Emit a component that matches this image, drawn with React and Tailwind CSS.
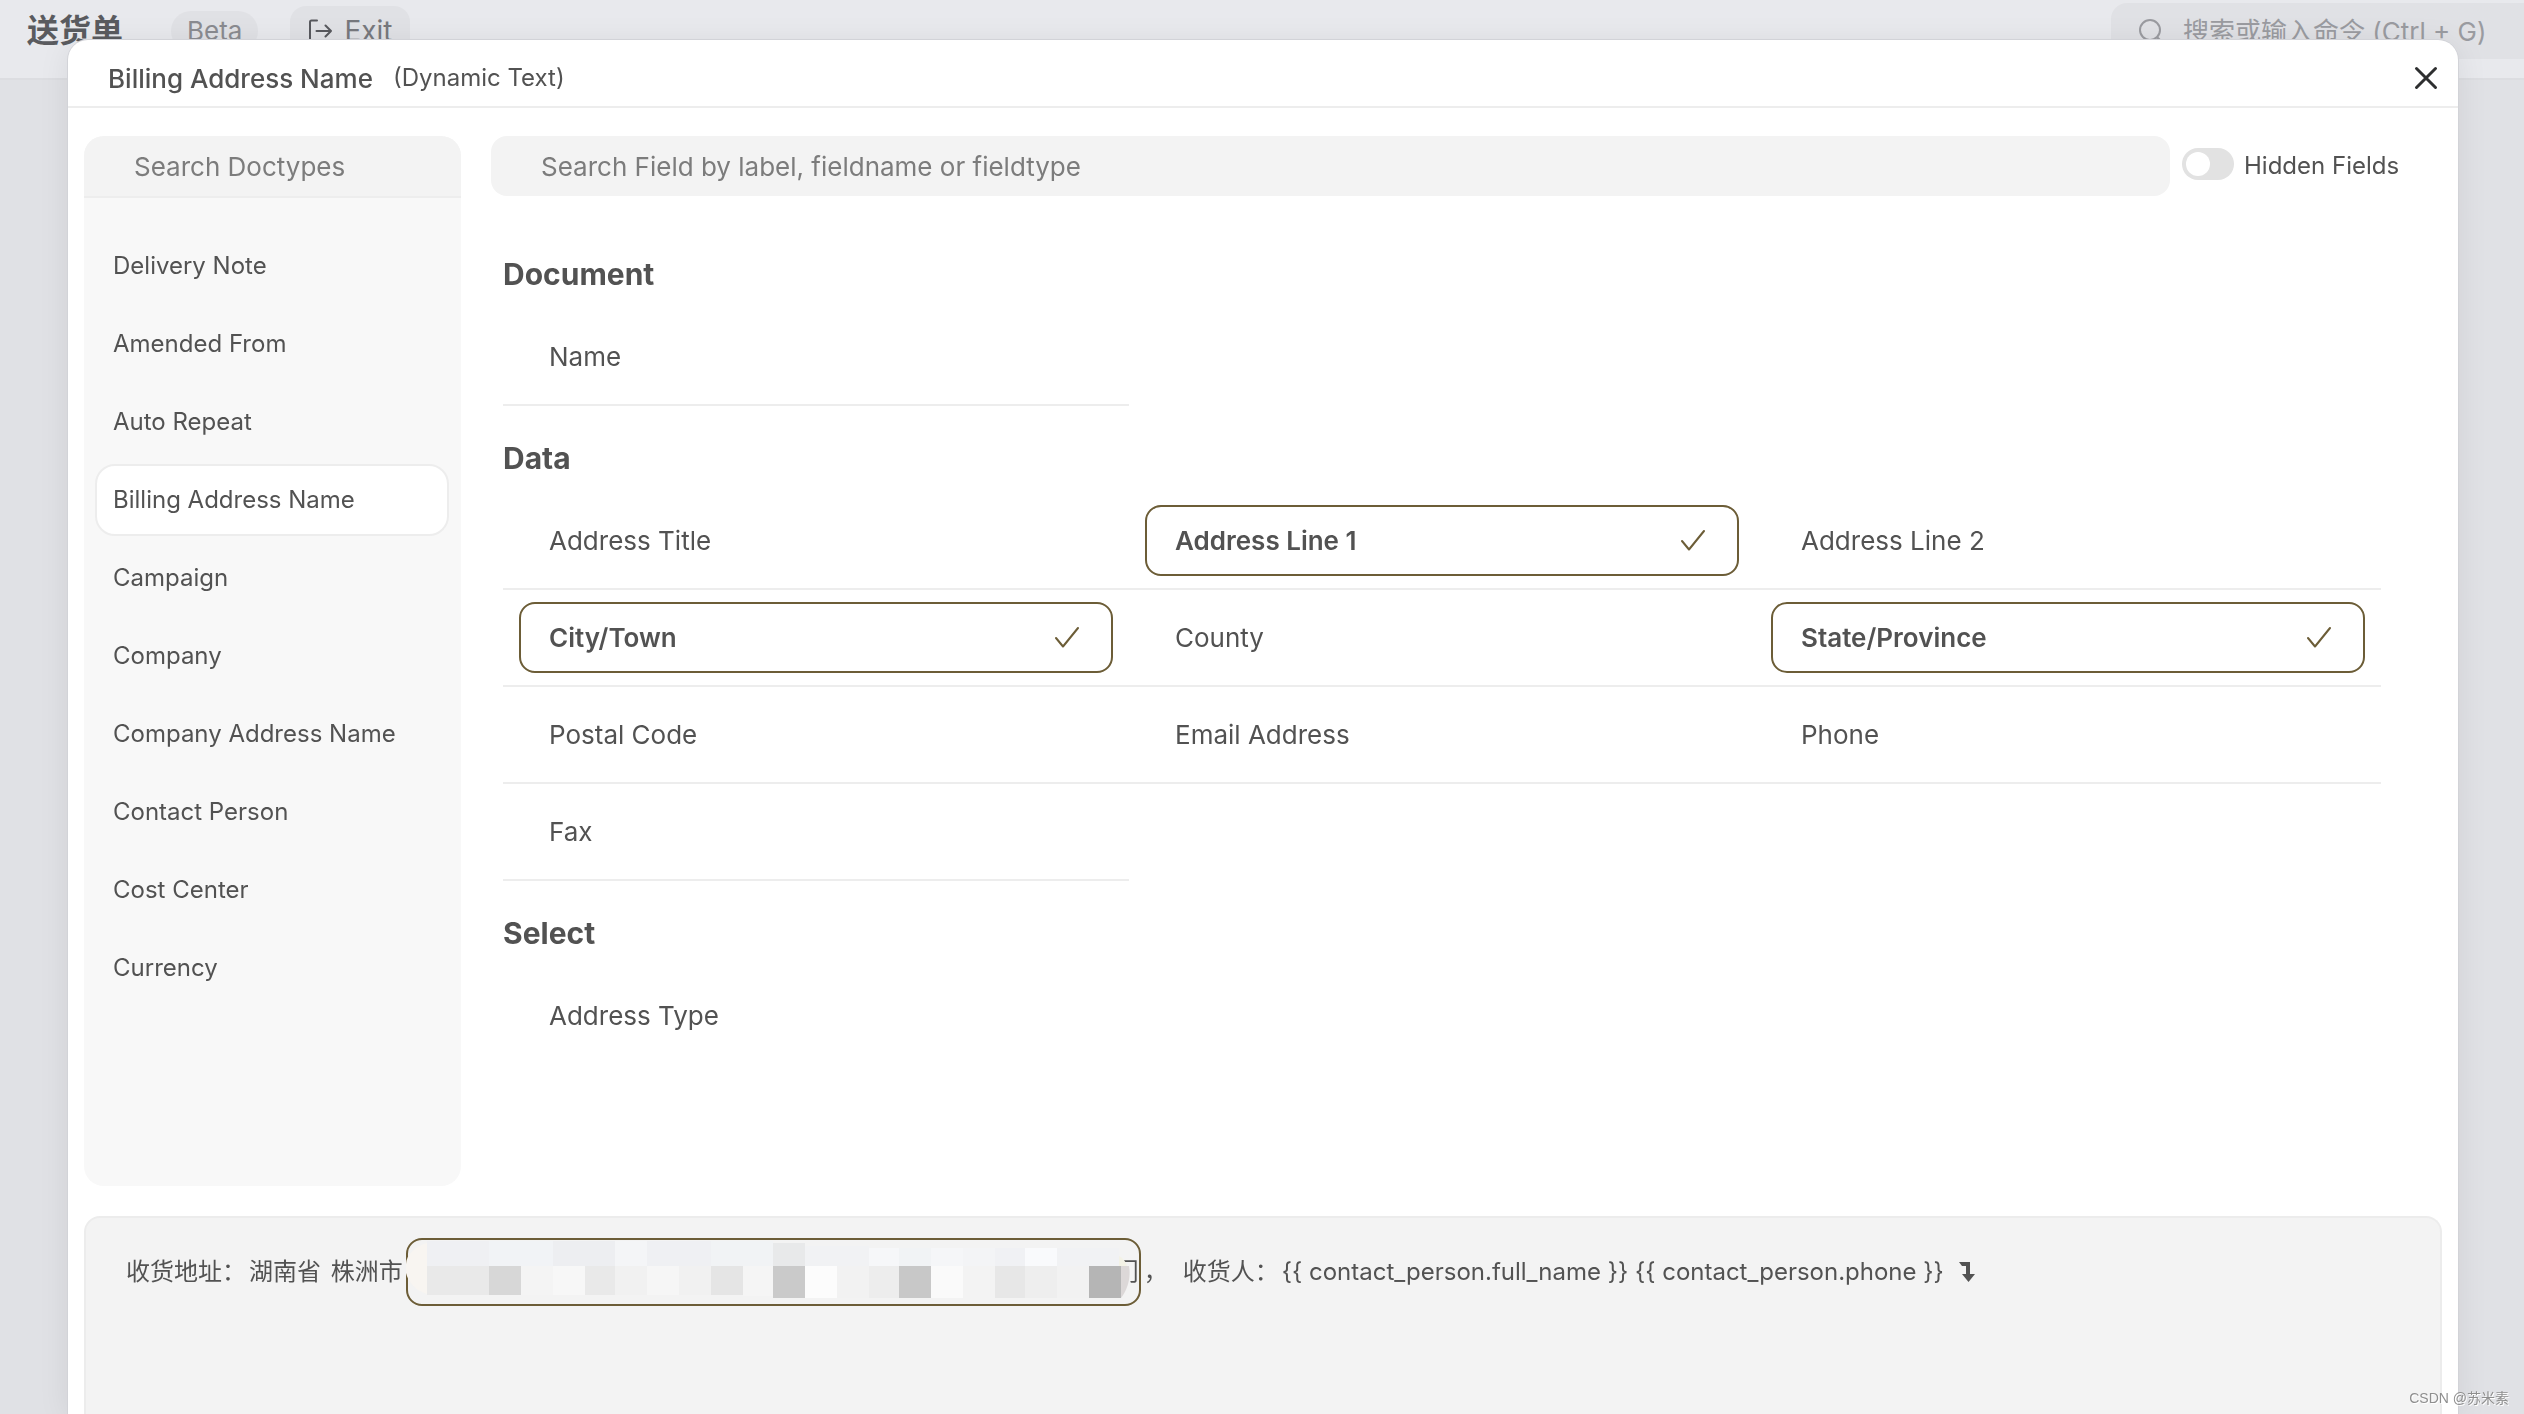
import React, { useState } from 'react';

const DOCTYPES = [
  'Delivery Note',
  'Amended From',
  'Auto Repeat',
  'Billing Address Name',
  'Campaign',
  'Company',
  'Company Address Name',
  'Contact Person',
  'Cost Center',
  'Currency',
];

const SECTIONS = [
  { title: 'Document', fields: ['Name'] },
  {
    title: 'Data',
    fields: [
      'Address Title',
      'Address Line 1',
      'Address Line 2',
      'City/Town',
      'County',
      'State/Province',
      'Postal Code',
      'Email Address',
      'Phone',
      'Fax',
    ],
  },
  { title: 'Select', fields: ['Address Type'], last: true },
];

// [x, y, width, height, fill] of each block that hides the address
const BLOCKS = [
  [21, 3, 62, 25, '#eff0f3'],
  [83, 3, 64, 25, '#f1f3f6'],
  [147, 3, 62, 25, '#edeef1'],
  [209, 3, 32, 25, '#f4f5f7'],
  [241, 3, 64, 25, '#eff0f3'],
  [305, 3, 62, 25, '#f1f3f5'],
  [367, 5, 32, 23, '#e8e9ea'],
  [399, 8, 64, 20, '#f1f2f4'],
  [463, 10, 30, 18, '#f6f7f9'],
  [493, 10, 32, 18, '#f1f3f5'],
  [525, 10, 32, 18, '#f5f6f8'],
  [557, 10, 32, 18, '#f3f4f6'],
  [589, 10, 30, 18, '#f0f1f4'],
  [619, 10, 32, 18, '#f9fafc'],
  [651, 10, 62, 18, '#f1f2f4'],
  [21, 28, 62, 29, '#e9e9e9'],
  [83, 28, 32, 29, '#d7d7d7'],
  [115, 28, 32, 29, '#f4f4f4'],
  [147, 28, 32, 29, '#f7f7f7'],
  [179, 28, 30, 29, '#e9e9e9'],
  [209, 28, 32, 29, '#f1f1f1'],
  [241, 28, 32, 29, '#f6f6f6'],
  [273, 28, 32, 29, '#f1f1f1'],
  [305, 28, 32, 29, '#e5e5e5'],
  [337, 28, 30, 30, '#f5f5f5'],
  [367, 28, 32, 32, '#cacaca'],
  [399, 28, 32, 32, '#fcfcfc'],
  [431, 28, 32, 32, '#f2f2f2'],
  [463, 28, 30, 32, '#ededed'],
  [493, 28, 32, 32, '#c8c8c8'],
  [525, 28, 32, 32, '#fafafa'],
  [557, 28, 32, 32, '#f3f3f3'],
  [589, 28, 30, 32, '#e7e7e7'],
  [619, 28, 32, 32, '#eeeeee'],
  [651, 28, 32, 32, '#f2f2f2'],
  [683, 28, 32, 32, '#b5b5b5'],
];

function TopBar() {
  return (
    <header className="flex h-20 items-start border-b-2 border-[#dcdde1] bg-[#e8e9ed] pl-[27px]">
      <h1 className="mt-[7px] text-[32px] leading-12 font-bold text-[#5a5b5f]">送货单</h1>
      <span className="mt-[11px] ml-12 rounded-full bg-[#e0e1e5] px-4 text-[26px] leading-10 text-[#8a8b90]">
        Beta
      </span>
      <button
        type="button"
        className="mt-[6px] ml-8 flex h-[50px] items-center gap-3 rounded-2xl bg-[#e0e1e5] px-[18px] text-[28px] text-[#77787d]"
      >
        <svg className="h-6 w-6" viewBox="0 0 24 24" fill="none" stroke="#58595e" strokeWidth="2" strokeLinecap="round" strokeLinejoin="round">
          <path d="M9 1.500H3.500a1.500 1.500 0 0 0-1.500 1.500v18a1.500 1.500 0 0 0 1.500 1.500H9" />
          <path d="M8.500 12H23M17.500 6.500L23 12l-5.500 5.500" />
        </svg>
        Exit
      </button>
      <label className="mt-[3px] ml-auto flex h-14 w-[413px] items-center rounded-l-2xl bg-[#e0e1e5] pl-7">
        <svg className="h-6 w-6 shrink-0" viewBox="0 0 24 24" fill="none" stroke="#9a9ba0" strokeWidth="2" strokeLinecap="round">
          <circle cx="11" cy="11" r="10" />
          <path d="M18.500 18.500L23 23" />
        </svg>
        <input
          type="text"
          aria-label="Search"
          placeholder="搜索或输入命令 (Ctrl + G)"
          className="ml-5 w-full min-w-0 bg-transparent text-[26px] outline-none placeholder:text-[#9a9ba0]"
        />
      </label>
    </header>
  );
}

function DoctypeList({ current, onSelect }) {
  return (
    <aside className="flex h-[1050px] w-[377px] shrink-0 flex-col overflow-hidden rounded-[20px] bg-[#f8f8f8]">
      <input
        type="text"
        aria-label="Search Doctypes"
        placeholder="Search Doctypes"
        className="h-[62px] border-b-2 border-[#ededed] bg-[#f3f3f3] px-[50px] text-[26px] outline-none placeholder:text-[#7c7c7c]"
      />
      <nav className="flex flex-col gap-[6px] pt-8 pr-3 pl-[11px]">
        {DOCTYPES.map((name) => (
          <button
            key={name}
            type="button"
            onClick={() => onSelect(name)}
            className={`h-[72px] rounded-[20px] border-2 px-4 text-left text-2xl ${
              name === current ? 'border-[#ededed] bg-white' : 'border-transparent'
            }`}
          >
            {name}
          </button>
        ))}
      </nav>
    </aside>
  );
}

function Field({ label, selected, bordered, onToggle }) {
  return (
    <div className={`px-4 py-3 ${bordered ? 'border-b-2 border-[#ededed]' : ''}`}>
      <button
        type="button"
        aria-pressed={selected}
        onClick={onToggle}
        className={`flex h-[71px] w-full items-center justify-between rounded-2xl border-2 px-7 text-left text-[26px] ${
          selected ? 'border-[#6c5d37] font-semibold' : 'border-transparent'
        }`}
      >
        {label}
        {selected && (
          <svg className="h-7 w-7" viewBox="0 0 28 28" fill="none" stroke="#6c5d37" strokeWidth="2" strokeLinecap="round" strokeLinejoin="round">
            <path d="M1 14L8 22.500L23 4" />
          </svg>
        )}
      </button>
    </div>
  );
}

function Preview() {
  return (
    <div className="min-h-0 flex-1 rounded-t-2xl border-2 border-b-0 border-[#ececec] bg-[#f3f3f3] px-10 pt-5">
      <div className="flex items-center gap-[3px] text-2xl whitespace-pre">
        <span>收货地址：</span>
        <span>湖南省 </span>
        <span>株洲市</span>
        <div className="relative flex h-[68px] w-[735px] items-center justify-end rounded-2xl border-2 border-[#6c5d37]">
          <span>门</span>
          <svg className="absolute -top-[2px] -left-[2px] h-[68px] w-[735px]" viewBox="0 0 735 68">
            <path d="M21 5C10 8 0 17 0 26v9c2 9 10 18 21 21z" fill="#f8f5f1" />
            {BLOCKS.map(([x, y, w, h, fill]) => (
              <rect key={`${x}-${y}`} x={x} y={y} width={w} height={h} fill={fill} />
            ))}
            <path d="M705 28h18c2 11-1 23-8 32h-10z" fill="#dcd8d8" />
            <path d="M683 28h32v32h-32z" fill="#b5b5b5" />
            <path d="M713 28V18c4 2 7 6 8 10z" fill="#f3f2e6" />
          </svg>
        </div>
        <span>，</span>
        <span className="ml-3">收货人：</span>
        <span>{'{{ contact_person.full_name }} {{ contact_person.phone }}'}</span>
        <svg className="ml-3 h-5 w-4" viewBox="0 0 16 20" fill="#525252">
          <path d="M0 0h11v12h5l-6.500 8L3 12h4V4H3z" />
        </svg>
      </div>
    </div>
  );
}

function App() {
  const [doctype, setDoctype] = useState('Billing Address Name');
  const [showHidden, setShowHidden] = useState(false);
  const [selected, setSelected] = useState(['Address Line 1', 'City/Town', 'State/Province']);

  const toggleField = (field) => {
    setSelected((prev) =>
      prev.includes(field) ? prev.filter((f) => f !== field) : [...prev, field]
    );
  };

  return (
    <div className="h-screen overflow-hidden bg-[#e0e1e5] font-['Inter','Noto_Sans_CJK_SC',sans-serif] text-[#525252]">
      <TopBar />

      <div className="fixed inset-0 flex flex-col overflow-hidden pt-10 pr-[66px] pl-[68px]">
        <div
          role="dialog"
          aria-label={doctype}
          className="flex min-h-0 flex-1 flex-col rounded-t-[20px] bg-white shadow-[0_0_0_1px_#d2d3d8,0_4px_32px_rgba(0,0,0,0.08)]"
        >
          <div className="flex h-[68px] shrink-0 items-center border-b-2 border-[#ededed] pt-3 pr-5 pb-[2px] pl-10">
            <h2 className="text-[26px] font-medium">{doctype}</h2>
            <span className="ml-5 text-2xl">(Dynamic Text)</span>
            <button type="button" aria-label="Close" className="ml-auto">
              <svg className="h-6 w-6" viewBox="0 0 24 24" fill="none" stroke="#2e2f30" strokeWidth="3" strokeLinecap="round">
                <path d="M2.500 2.500l19 19M21.500 2.500l-19 19" />
              </svg>
            </button>
          </div>

          <div className="flex min-h-0 flex-1 flex-col gap-[30px] px-4 pt-7">
            <div className="flex shrink-0 gap-[30px]">
              <DoctypeList current={doctype} onSelect={setDoctype} />

              <main className="min-w-0 flex-1 pr-[42px]">
                <div className="flex items-center gap-3">
                  <input
                    type="text"
                    aria-label="Search Field"
                    placeholder="Search Field by label, fieldname or fieldtype"
                    className="h-[60px] min-w-0 flex-1 rounded-2xl bg-[#f3f3f3] px-[50px] text-[26px] outline-none placeholder:text-[#7c7c7c]"
                  />
                  <label className="flex w-[218px] items-center gap-[10px] text-2xl whitespace-nowrap">
                    <input
                      type="checkbox"
                      checked={showHidden}
                      onChange={(e) => setShowHidden(e.target.checked)}
                      className="mb-1 h-8 w-[52px] shrink-0 appearance-none rounded-full bg-[#e2e2e2] p-1 before:block before:h-6 before:w-6 before:rounded-full before:bg-white checked:bg-[#6c5d37] checked:before:ml-5"
                    />
                    Hidden Fields
                  </label>
                </div>

                <div className="pt-[26px] pr-[19px] pl-3">
                  {SECTIONS.map((section) => (
                    <section key={section.title}>
                      <h3 className="pt-[34px] pb-[17px] text-3xl leading-9 font-bold">{section.title}</h3>
                      <div className="grid grid-cols-3">
                        {section.fields.map((field) => (
                          <Field
                            key={field}
                            label={field}
                            bordered={!section.last}
                            selected={selected.includes(field)}
                            onToggle={() => toggleField(field)}
                          />
                        ))}
                      </div>
                    </section>
                  ))}
                </div>
              </main>
            </div>

            <Preview />
          </div>
        </div>
      </div>

      <p className="fixed right-[15px] bottom-[6px] font-['Liberation_Sans','Noto_Sans_CJK_SC',sans-serif] text-sm text-[#8f8f8f] [text-shadow:1px_1px_0_#ffffff]">
        CSDN @苏米素
      </p>
    </div>
  );
}

export default App;
